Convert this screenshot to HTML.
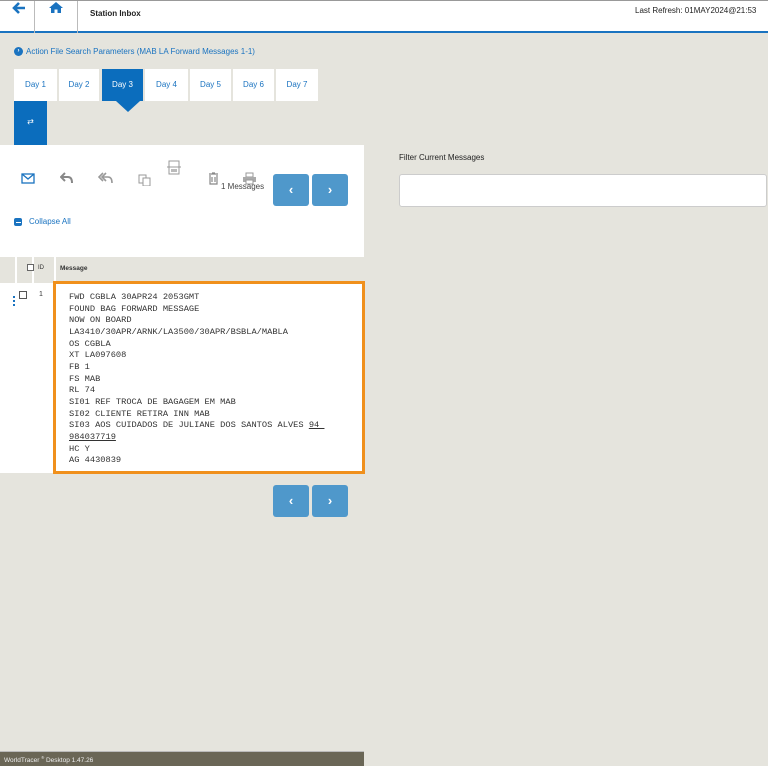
<!DOCTYPE html>
<html><head><meta charset="utf-8"><style>
*{margin:0;padding:0;box-sizing:border-box}
body{width:768px;height:766px;background:#e5e4dd;font-family:"Liberation Sans",sans-serif;position:relative;overflow:hidden}
.a{position:absolute}
.tab{position:absolute;top:69px;height:32px;background:#fff;color:#1a73c0;font-size:8px;text-align:center;line-height:32px}
.btn{position:absolute;width:36px;height:32px;background:#4f98cb;border-radius:3px;color:#fff;font-size:13px;font-weight:bold;text-align:center;line-height:31px}
.msg{font-family:"Liberation Mono",monospace;font-size:8.7px;line-height:11.65px;color:#333;white-space:pre}
</style></head><body>
<div class="a" style="left:0;top:0;width:768px;height:33px;background:#fff;border-top:1px solid #999;border-bottom:2px solid #1a73c0"></div>
<div class="a" style="left:34px;top:1px;width:1px;height:32px;background:#bbb"></div>
<div class="a" style="left:77px;top:1px;width:1px;height:32px;background:#bbb"></div>
<svg class="a" style="left:12px;top:2px" width="14" height="12" viewBox="0 0 14 12"><path d="M7 1 L2 6 L7 11 M2 6 H13" stroke="#1a73c0" stroke-width="2.6" fill="none"/></svg>
<svg class="a" style="left:49px;top:2px" width="14" height="11" viewBox="0 0 14 11"><path d="M7 0 L0 6 H2 V11 H5.5 V7.5 H8.5 V11 H12 V6 H14 Z" fill="#1a73c0"/></svg>
<div class="a" style="left:90px;top:9px;font-size:8px;font-weight:bold;color:#222">Station Inbox</div>
<div class="a" style="left:635px;top:6px;font-size:8px;color:#222">Last Refresh: 01MAY2024@21:53</div>
<div class="a" style="left:14px;top:47px;width:9px;height:9px;border-radius:50%;background:#1a73c0;color:#fff;font-size:6px;line-height:9px;text-align:center;font-weight:bold">›</div>
<div class="a" style="left:26px;top:47px;font-size:8px;color:#1a73c0">Action File Search Parameters (MAB LA Forward Messages 1-1)</div>
<div class="tab" style="left:14px;width:43px">Day 1</div>
<div class="tab" style="left:59px;width:40px">Day 2</div>
<div class="tab" style="left:102px;width:41px;background:#0b6dbd;color:#fff">Day 3</div>
<div class="tab" style="left:145px;width:43px">Day 4</div>
<div class="tab" style="left:190px;width:41px">Day 5</div>
<div class="tab" style="left:233px;width:41px">Day 6</div>
<div class="tab" style="left:276px;width:42px">Day 7</div>
<div class="a" style="left:116px;top:101px;width:0;height:0;border-left:12px solid transparent;border-right:12px solid transparent;border-top:11px solid #0b6dbd"></div>
<div class="a" style="left:14px;top:101px;width:33px;height:44px;background:#0b6dbd;color:#fff;font-size:8px;text-align:center;line-height:42px">⇄</div>
<div class="a" style="left:0;top:145px;width:364px;height:112px;background:#fff"></div>
<svg class="a" style="left:21px;top:173px" width="14" height="11"><rect x="1" y="1" width="12" height="9" fill="none" stroke="#1a73c0" stroke-width="1.3"/><path d="M1 1 L7 6 L13 1" fill="none" stroke="#1a73c0" stroke-width="1.3"/></svg>
<svg class="a" style="left:60px;top:172px" width="14" height="12"><path d="M5 1 L1 5 L5 9 M1 5 H8 Q12 5 12 11" fill="none" stroke="#888" stroke-width="2"/></svg>
<svg class="a" style="left:98px;top:172px" width="16" height="12"><path d="M5 1 L1 5 L5 9 M8 1 L4 5 L8 9 M4 5 H10 Q14 5 14 11" fill="none" stroke="#999" stroke-width="1.6"/></svg>
<svg class="a" style="left:138px;top:172px" width="14" height="14"><rect x="1" y="3" width="7" height="8" fill="none" stroke="#999"/><rect x="5" y="6" width="7" height="8" fill="#fff" stroke="#999"/></svg>
<svg class="a" style="left:166px;top:160px" width="16" height="15"><rect x="3" y="1" width="10" height="13" fill="none" stroke="#999"/><path d="M1 7 H15" stroke="#999"/><rect x="5" y="9" width="6" height="3" fill="#bbb"/></svg>
<svg class="a" style="left:208px;top:172px" width="11" height="13"><path d="M1 2 H10 M4 1 H7 M2 3 V12 H9 V3 M4 5 V10 M7 5 V10" fill="none" stroke="#888" stroke-width="1.2"/></svg>
<svg class="a" style="left:242px;top:172px" width="15" height="13"><rect x="4" y="1" width="7" height="4" fill="none" stroke="#999"/><rect x="1" y="5" width="13" height="5" fill="#aaa"/><rect x="4" y="8" width="7" height="4" fill="#fff" stroke="#999"/></svg>
<div class="a" style="left:221px;top:182px;font-size:8px;color:#444">1 Messages</div>
<div class="btn" style="left:273px;top:174px">‹</div>
<div class="btn" style="left:312px;top:174px">›</div>
<div class="a" style="left:14px;top:218px;width:8px;height:8px;border-radius:2px;background:#1a73c0"><div style="margin:3.5px 1.5px;height:1px;background:#fff"></div></div>
<div class="a" style="left:29px;top:217px;font-size:8px;color:#1a73c0">Collapse All</div>
<div class="a" style="left:0;top:257px;width:364px;height:26px;background:#e5e4dd"></div>
<div class="a" style="left:15px;top:257px;width:2px;height:216px;background:#fff"></div>
<div class="a" style="left:32px;top:257px;width:2px;height:216px;background:#fff"></div>
<div class="a" style="left:54px;top:257px;width:2px;height:26px;background:#fff"></div>
<div class="a" style="left:27px;top:264px;width:7px;height:7px;border:1px solid #666;background:#fff"></div>
<div class="a" style="left:38px;top:265px;font-size:6px;color:#333">ID</div>
<div class="a" style="left:60px;top:265px;font-size:6.5px;font-weight:bold;color:#333">Message</div>
<div class="a" style="left:0;top:283px;width:55px;height:190px;background:#fff"></div>
<div class="a" style="left:13px;top:296px;width:2px;height:10px;border-left:2px dotted #1a73c0"></div>
<div class="a" style="left:19px;top:291px;width:8px;height:8px;border:1px solid #555;background:#fff"></div>
<div class="a" style="left:39px;top:291px;font-size:7px;color:#333">1</div>
<div class="a msg" style="left:53px;top:281px;width:312px;height:193px;border:3px solid #f0901c;background:#fff;padding:8px 0 0 13px">FWD CGBLA 30APR24 2053GMT
FOUND BAG FORWARD MESSAGE
NOW ON BOARD
LA3410/30APR/ARNK/LA3500/30APR/BSBLA/MABLA
OS CGBLA
XT LA097608
FB 1
FS MAB
RL 74
SI01 REF TROCA DE BAGAGEM EM MAB
SI02 CLIENTE RETIRA INN MAB
SI03 AOS CUIDADOS DE JULIANE DOS SANTOS ALVES <u>94 </u>
<u>984037719</u>
HC Y
AG 4430839</div>
<div class="btn" style="left:273px;top:485px">‹</div>
<div class="btn" style="left:312px;top:485px">›</div>
<div class="a" style="left:399px;top:153px;font-size:8px;color:#222">Filter Current Messages</div>
<div class="a" style="left:399px;top:174px;width:368px;height:33px;background:#fff;border:1px solid #ccc;border-radius:3px"></div>
<div class="a" style="left:0;top:751px;width:364px;height:15px;background:#6a6656;border-top:1px solid #bbb;color:#eee;font-size:6.5px;padding:3px 0 0 4px">WorldTracer <sup style="font-size:4px">®</sup> Desktop 1.47.26</div>
</body></html>
